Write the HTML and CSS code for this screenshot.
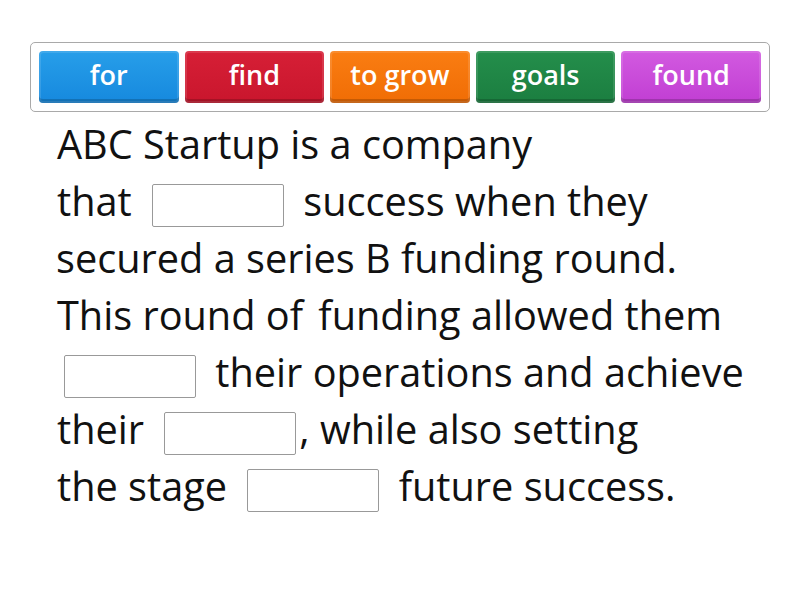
FILE: index.html
```html
<!DOCTYPE html>
<html lang="en">
<head>
    <meta charset="UTF-8">
    <title>Missing word</title>
    <link rel="stylesheet" href="styles.css">
</head>
<body>
    <div class="bank">
        <div class="word blue">for</div>
        <div class="word red">find</div>
        <div class="word orange">to grow</div>
        <div class="word green">goals</div>
        <div class="word purple">found</div>
    </div>

    <div class="passage">
        <div class="line">ABC Startup is a company</div>
        <div class="line">that <span class="gap g1"></span> success when they</div>
        <div class="line l3">secured a series B funding round.</div>
        <div class="line">This round of <span class="wide">funding</span> allowed them</div>
        <div class="line"><span class="gap g2"></span> their operations and achieve</div>
        <div class="line">their <span class="gap g3"></span>, while also setting</div>
        <div class="line">the stage <span class="gap g4"></span> future success.</div>
    </div>
</body>
</html>
```

FILE: styles.css
```css
body {
    margin: 0;
    background: #fff;
    font-family: "Open Sans", sans-serif;
    color: #111;
}

.bank {
    margin: 42px 0 0 30px;
    width: 722px;
    padding: 8px;
    border: 1px solid #a9a9a9;
    border-radius: 5px;
    display: flex;
    gap: 6px;
}

.word {
    width: 140px;
    height: 52px;
    box-sizing: border-box;
    border-radius: 4px;
    color: #fff;
    font-size: 27px;
    font-weight: 600;
    line-height: 47px;
    text-align: center;
    box-shadow: inset 0 -4px 0 rgba(0, 0, 0, 0.18), inset 0 0 0 2px rgba(255, 255, 255, 0.12);
}

.blue { background: linear-gradient(#279ee9, #1689de); }
.red { background: linear-gradient(#d61f36, #c9162d); }
.orange { background: linear-gradient(#fa7d12, #f06d05); }
.green { background: linear-gradient(#248e4b, #1b7e40); }
.purple { background: linear-gradient(#d25ae0, #c13ed3); }

.passage {
    margin: 4px 0 0 57px;
    font-size: 39.7px;
    line-height: 57px;
}

.line {
    white-space: nowrap;
}

.l3 {
    margin-left: -1px;
}

.wide {
    margin-left: 5px;
}

.gap {
    display: inline-block;
    width: 132px;
    height: 43px;
    box-sizing: border-box;
    border: 1px solid #999;
    border-radius: 2px;
    vertical-align: middle;
    margin: 0 9px 0 10px;
}

.g2 {
    margin-left: 7px;
}

.g3 {
    margin-right: 3px;
}
```
